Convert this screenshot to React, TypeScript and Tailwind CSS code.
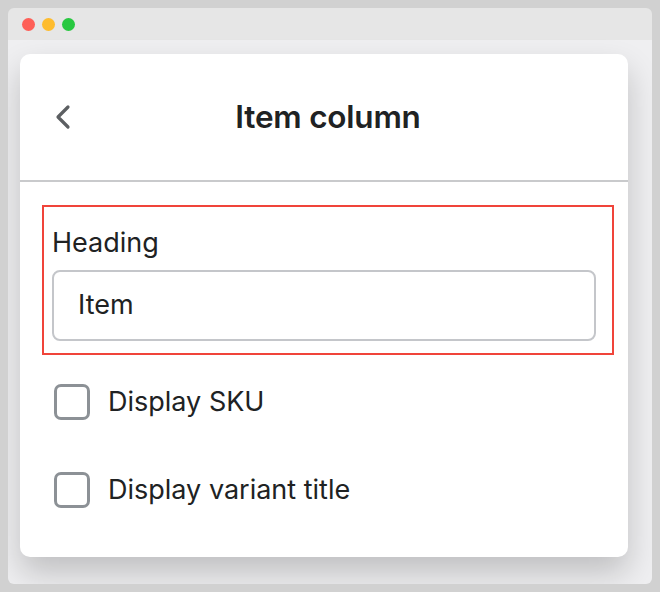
import React from "react";

export default function App() {
  return (
    <div
      className="w-[660px] h-[592px] bg-[#d1d1d1] p-2"
      style={{ fontFamily: "Inter, 'Noto Sans', sans-serif" }}
    >
      <div className="w-full h-full rounded-[6px] overflow-hidden flex flex-col">
        <div className="h-8 bg-[#e6e6e6] flex items-center gap-[7px] pl-[14px] shrink-0">
          <span className="w-[13px] h-[13px] rounded-full bg-[#fe5f57]" />
          <span className="w-[13px] h-[13px] rounded-full bg-[#febc2e]" />
          <span className="w-[13px] h-[13px] rounded-full bg-[#28c840]" />
        </div>
        <div className="flex-1 bg-[#efeff1] pl-3 pr-6 pt-[14px] pb-[27px] flex flex-col">
          <div className="flex-1 bg-white rounded-[10px] shadow-[0_16px_32px_rgba(0,0,0,0.2)] flex flex-col">
            <div className="h-[128px] border-b-2 border-[#c9cacc] flex items-center px-[34px] relative shrink-0">
              <svg width="18" height="26" viewBox="0 0 18 26" className="shrink-0">
                <polyline
                  points="14,3 4,13 14,23"
                  fill="none"
                  stroke="#5c5f62"
                  strokeWidth="3.2"
                  strokeLinecap="round"
                  strokeLinejoin="round"
                />
              </svg>
              <div className="absolute inset-0 pl-[8px] flex items-center justify-center pointer-events-none">
                <h1 className="text-[31.5px] font-semibold text-[#202223] tracking-[-0.2px]">Item column</h1>
              </div>
            </div>
            <div className="pt-[23px] pl-[22px] pr-[14px] flex flex-col">
              <div className="border-2 border-[#f0443a] pl-[8px] pr-[16px] pt-[19px] pb-[12px] flex flex-col">
                <label className="text-[27px] leading-[33px] text-[#202223] mb-[11px]">Heading</label>
                <div className="h-[71px] border-2 border-[#c4c6ca] rounded-[8px] flex items-center px-[24px]">
                  <span className="text-[27px] text-[#202223]">Item</span>
                </div>
              </div>
            </div>
            <div className="pl-[34px] flex flex-col gap-[48px] pt-[27px]">
              <div className="h-[40px] flex items-center gap-[18px]">
                <span className="w-[36px] h-[36px] border-[3px] border-[#8c9196] rounded-[7px] shrink-0" />
                <span className="text-[27px] leading-[40px] text-[#202223]">Display SKU</span>
              </div>
              <div className="h-[40px] flex items-center gap-[18px]">
                <span className="w-[36px] h-[36px] border-[3px] border-[#8c9196] rounded-[7px] shrink-0" />
                <span className="text-[27px] leading-[40px] text-[#202223]">Display variant title</span>
              </div>
            </div>
          </div>
        </div>
      </div>
    </div>
  );
}
